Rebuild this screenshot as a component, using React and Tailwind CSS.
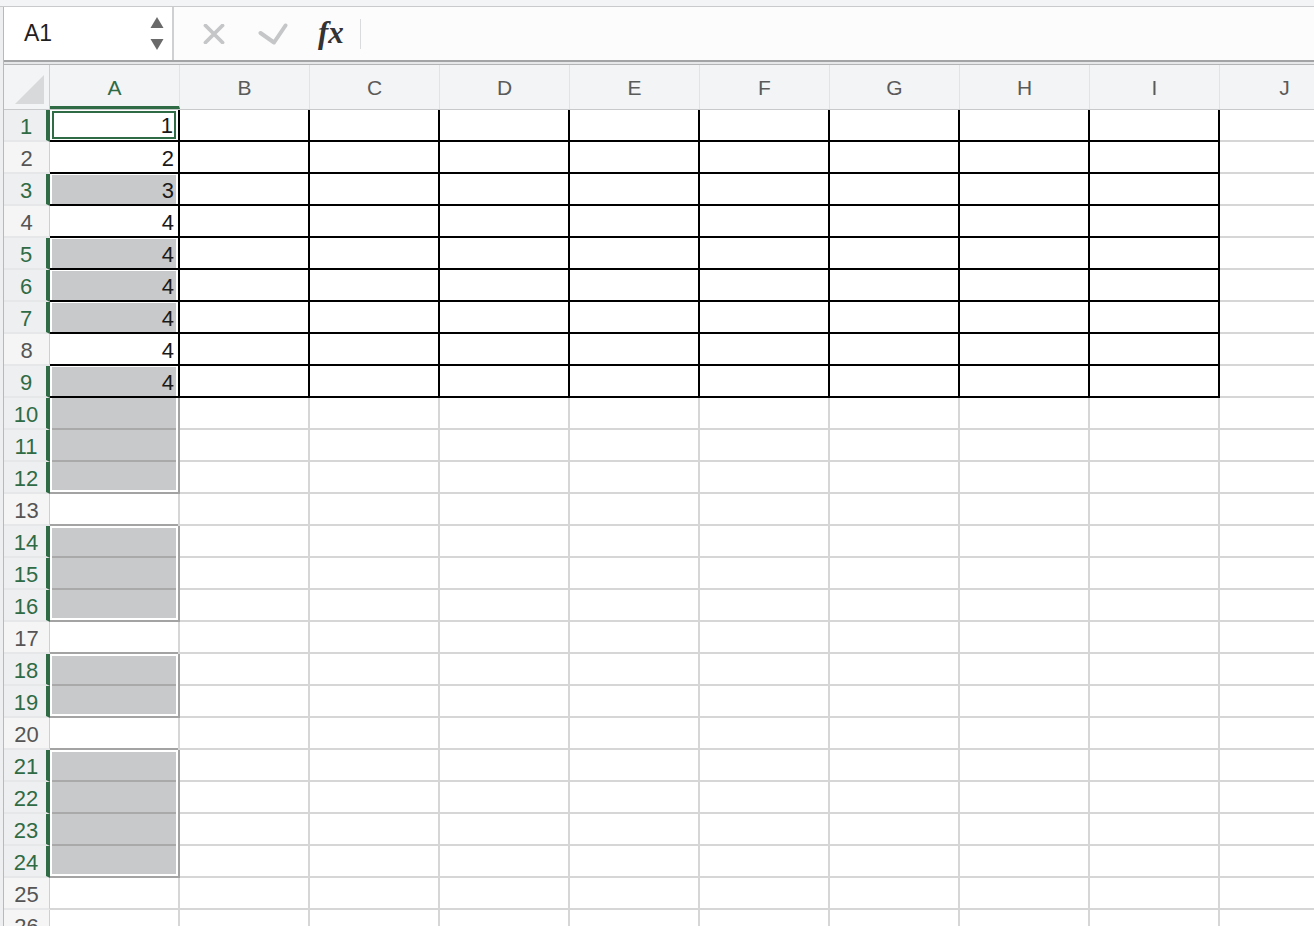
import React from 'react';

const COLS = ['A', 'B', 'C', 'D', 'E', 'F', 'G', 'H', 'I', 'J'];
const VALUES = { 1: '1', 2: '2', 3: '3', 4: '4', 5: '4', 6: '4', 7: '4', 8: '4', 9: '4' };
const SELECTED = new Set([3, 5, 6, 7, 9, 10, 11, 12, 14, 15, 16, 18, 19, 21, 22, 23, 24]);
const ACTIVE_ROW = 1;
const TABLE_LAST_ROW = 9;
const ROW_COUNT = 26;

const FONT = { fontFamily: '"Liberation Sans", Arial, sans-serif' };

function NameBox() {
  return (
    <div className="flex h-full w-[170px] shrink-0 items-center justify-between border-r-2 border-[#cfd0d1] bg-white pl-[20px] pr-[8px]">
      <span className="text-[23px] text-[#1f1f1f]">A1</span>
      <svg width="14" height="36" viewBox="0 0 14 36">
        <path d="M7 1 L13.5 12 L0.5 12 Z" fill="#6a6a6a" />
        <path d="M0.5 23 L13.5 23 L7 34 Z" fill="#6a6a6a" />
      </svg>
    </div>
  );
}

function FormulaBar() {
  return (
    <div className="flex h-[53px] items-center bg-[#fcfcfd]">
      <NameBox />
      <div className="ml-[29px] flex items-center">
        <svg width="22" height="20" viewBox="0 0 22 20">
          <path d="M2.5 1.5 L19.5 18.5 M19.5 1.5 L2.5 18.5" stroke="#c5c6c7" strokeWidth="3.8" strokeLinecap="round" />
        </svg>
      </div>
      <div className="ml-[33px] flex items-center">
        <svg width="30" height="22" viewBox="0 0 30 22">
          <path d="M2.5 10 L16 19.5 L27.5 2.5" stroke="#c5c6c7" strokeWidth="4" fill="none" strokeLinecap="round" strokeLinejoin="round" />
        </svg>
      </div>
      <span
        className="ml-[30px] pb-[2px] text-[31px] font-semibold italic leading-none text-[#333]"
        style={{ fontFamily: '"Liberation Serif", "Times New Roman", serif' }}
      >
        fx
      </span>
      <div className="ml-[16px] h-[30px] w-px bg-[#dadbdc]" />
    </div>
  );
}

function HeaderRow() {
  return (
    <div className="flex h-[45px] border-b border-[#c8c9ca] bg-[#f3f4f5]">
      <div className="flex h-full w-[46px] shrink-0 items-end justify-end border-r border-[#cfcfcf]">
        <svg width="45" height="44" viewBox="0 0 45 44">
          <path d="M11 39 L40 39 L40 10 Z" fill="#d8d9da" />
        </svg>
      </div>
      {COLS.map((c) => (
        <div
          key={c}
          className={
            c === 'A'
              ? 'flex h-full w-[130px] shrink-0 items-center justify-center border-b-[3px] border-r border-[#2f6b45] border-r-[#e2e3e4] pt-[4px] text-[21px] text-[#2f6b45]'
              : 'flex h-full w-[130px] shrink-0 items-center justify-center border-r border-[#e2e3e4] pt-[2px] text-[21px] text-[#5a5a5a]'
          }
        >
          {c}
        </div>
      ))}
    </div>
  );
}

function RowHeader({ row }) {
  const on = SELECTED.has(row) || row === ACTIVE_ROW;
  return (
    <div
      className={
        on
          ? 'flex h-full w-[46px] shrink-0 items-center justify-center border-b-2 border-r-[4px] border-b-[#e6e7e8] border-r-[#2f6b45] bg-[#eeeff0] pl-[2px] pt-[2px] text-[22px] text-[#2f6b45]'
          : 'flex h-full w-[46px] shrink-0 items-center justify-center border-b-2 border-r border-b-[#e6e7e8] border-r-[#cfcfcf] bg-[#f5f5f6] pt-[2px] text-[22px] text-[#555]'
      }
    >
      {row}
    </div>
  );
}

// column A carries the selection fills, so its bottom edge is drawn as its own line
function ACell({ row }) {
  const inTable = row <= TABLE_LAST_ROW;
  const sel = SELECTED.has(row);
  const prevSel = SELECTED.has(row - 1);
  const nextSel = SELECTED.has(row + 1);
  const active = row === ACTIVE_ROW;

  let right = 'border-[#d6d6d6]';
  if (inTable) right = 'border-black';
  else if (sel) right = 'border-[#a3a3a3]';

  let bottom = 'h-[2px] bg-[#d6d6d6]';
  if (inTable) bottom = 'h-[2px] bg-black';
  else if (sel && nextSel) bottom = 'mx-[2px] h-[2px] bg-[#a9a9a9]';
  else if (sel !== nextSel) bottom = 'h-[2px] bg-[#a3a3a3]';

  let pad = 'px-[2px]';
  if (active) pad = 'px-[2px] pt-[1px] pb-[1px]';
  else if (sel && inTable) pad = 'px-[2px] pt-[1px]';
  else if (sel && !prevSel && !nextSel) pad = 'px-[2px] pt-[2px] pb-[2px]';
  else if (sel && !prevSel) pad = 'px-[2px] pt-[2px]';
  else if (sel && !nextSel) pad = 'px-[2px] pb-[2px]';

  let fill = 'flex h-full items-center justify-end pr-[2px] pt-[3px]';
  if (active) fill = 'flex h-full items-center justify-end border-2 border-[#2f6b45] bg-white pr-[1px] pt-[2px]';
  else if (sel) fill = 'flex h-full items-center justify-end bg-[#c8c9cb] pr-[2px] pt-[2px]';

  return (
    <div className={`flex h-full w-[130px] shrink-0 flex-col border-r-2 ${right}`}>
      <div className={`min-h-0 flex-1 ${pad}`}>
        <div className={fill}>
          <span className="text-[22px] leading-none text-[#1a1a1a]">{VALUES[row]}</span>
        </div>
      </div>
      <div className={bottom} />
    </div>
  );
}

function GridCell({ row, col }) {
  const inTable = row <= TABLE_LAST_ROW && col !== 'J';
  return (
    <div
      className={
        inTable
          ? 'h-full w-[130px] shrink-0 border-b-2 border-r-2 border-black bg-white'
          : 'h-full w-[130px] shrink-0 border-b-2 border-r-2 border-[#d6d6d6] bg-white'
      }
    />
  );
}

function SheetRow({ row }) {
  return (
    <div className="flex h-[32px]">
      <RowHeader row={row} />
      <ACell row={row} />
      {COLS.slice(1).map((c) => (
        <GridCell key={c} row={row} col={c} />
      ))}
    </div>
  );
}

export default function App() {
  const rows = Array.from({ length: ROW_COUNT }, (_, i) => i + 1);
  return (
    <div className="h-[926px] w-[1314px] overflow-hidden bg-white" style={FONT}>
      <div className="h-[7px] border-b border-[#c9cacb] bg-[#f3f4f6]" />
      <div className="flex h-[919px]">
        <div className="w-[4px] shrink-0 border-r border-[#b8b9ba] bg-[#eeeff0]" />
        <div className="min-w-0 flex-1 overflow-hidden">
          <FormulaBar />
          <div className="h-[5px] border-b border-t-2 border-[#a3a4a5] border-b-[#b3b4b5] bg-[#e6e7e8]" />
          <HeaderRow />
          {rows.map((r) => (
            <SheetRow key={r} row={r} />
          ))}
        </div>
      </div>
    </div>
  );
}
